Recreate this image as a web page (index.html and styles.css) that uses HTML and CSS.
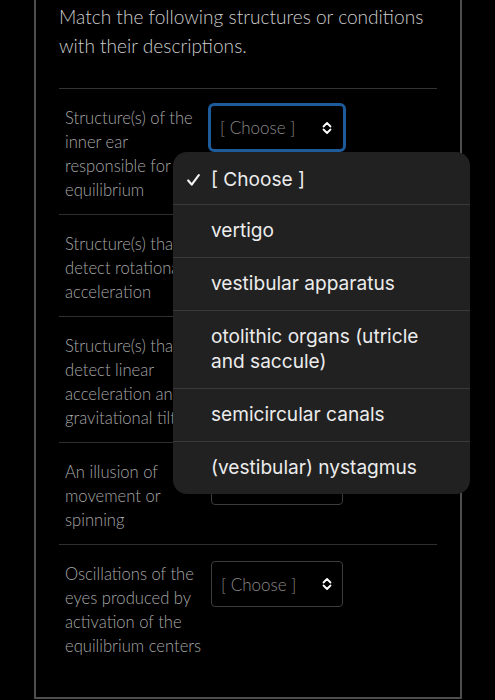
FILE: index.html
```html
<!DOCTYPE html>
<html>
<head>
<meta charset="utf-8">
<link rel="stylesheet" href="styles.css">
</head>
<body>
<div class="quiz">
  <p class="question">Match the following structures or conditions with their descriptions.</p>
  <div class="rows">
    <div class="row">
      <div class="label">Structure(s) of the inner ear responsible for equilibrium</div>
      <div class="select focused"><span class="sel-text">[ Choose ]</span><svg class="chev" viewBox="0 0 10 14" width="10" height="14"><path d="M1.5 5.5 L5 2 L8.5 5.5 M1.5 8.5 L5 12 L8.5 8.5" fill="none" stroke="#fff" stroke-width="1.8" stroke-linecap="round" stroke-linejoin="round"/></svg></div>
    </div>
    <div class="row">
      <div class="label">Structure(s) that detect rotational acceleration</div>
      <div class="select"><span class="sel-text">[ Choose ]</span><svg class="chev" viewBox="0 0 10 14" width="10" height="14"><path d="M1.5 5.5 L5 2 L8.5 5.5 M1.5 8.5 L5 12 L8.5 8.5" fill="none" stroke="#fff" stroke-width="1.8" stroke-linecap="round" stroke-linejoin="round"/></svg></div>
    </div>
    <div class="row">
      <div class="label">Structure(s) that detect linear acceleration and gravitational tilt</div>
      <div class="select"><span class="sel-text">[ Choose ]</span><svg class="chev" viewBox="0 0 10 14" width="10" height="14"><path d="M1.5 5.5 L5 2 L8.5 5.5 M1.5 8.5 L5 12 L8.5 8.5" fill="none" stroke="#fff" stroke-width="1.8" stroke-linecap="round" stroke-linejoin="round"/></svg></div>
    </div>
    <div class="row">
      <div class="label">An illusion of movement or spinning</div>
      <div class="select"><span class="sel-text">[ Choose ]</span><svg class="chev" viewBox="0 0 10 14" width="10" height="14"><path d="M1.5 5.5 L5 2 L8.5 5.5 M1.5 8.5 L5 12 L8.5 8.5" fill="none" stroke="#fff" stroke-width="1.8" stroke-linecap="round" stroke-linejoin="round"/></svg></div>
    </div>
    <div class="row">
      <div class="label">Oscillations of the eyes produced by activation of the equilibrium centers</div>
      <div class="select"><span class="sel-text">[ Choose ]</span><svg class="chev" viewBox="0 0 10 14" width="10" height="14"><path d="M1.5 5.5 L5 2 L8.5 5.5 M1.5 8.5 L5 12 L8.5 8.5" fill="none" stroke="#fff" stroke-width="1.8" stroke-linecap="round" stroke-linejoin="round"/></svg></div>
    </div>
  </div>
</div>
<ul class="menu">
  <li class="item"><svg class="check" viewBox="0 0 13 12" width="13" height="12"><path d="M1.2 6.5 L4.7 10.6 L11.8 1.2" fill="none" stroke="#f2f2f2" stroke-width="2.2" stroke-linecap="round" stroke-linejoin="round"/></svg><span>[ Choose ]</span></li>
  <li class="item"><span class="nocheck"></span><span>vertigo</span></li>
  <li class="item"><span class="nocheck"></span><span>vestibular apparatus</span></li>
  <li class="item"><span class="nocheck"></span><span>otolithic organs (utricle and saccule)</span></li>
  <li class="item"><span class="nocheck"></span><span>semicircular canals</span></li>
  <li class="item"><span class="nocheck"></span><span>(vestibular) nystagmus</span></li>
</ul>
</body>
</html>
```

FILE: styles.css
```css
html, body {
  margin: 0;
  padding: 0;
  background: #000;
}
body {
  font-family: Lato, "Liberation Sans", sans-serif;
  font-weight: 300;
  height: 700px;
  overflow: hidden;
  position: relative;
}
.quiz {
  box-sizing: border-box;
  margin-left: 34px;
  width: 428px;
  height: 699px;
  border: 2px solid #4e4e4e;
  border-top: none;
  padding: 0 23px;
}
.question {
  margin: 0;
  padding-top: 2px;
  padding-bottom: 28px;
  font-size: 19.1px;
  line-height: 29px;
  color: #cdcdcd;
}
.row {
  display: flex;
  align-items: flex-start;
  border-top: 1px solid #2e2e2e;
  padding: 17px 0 12px 6px;
}
.row:first-child {
  border-top-color: #333;
}
.label {
  width: 142px;
  flex: none;
  font-size: 16.6px;
  line-height: 24px;
  color: #a6a6a6;
  overflow: hidden;
}
.select {
  box-sizing: border-box;
  margin-left: 4px;
  margin-top: -1px;
  width: 132px;
  height: 46px;
  border: 1px solid #3c3c3c;
  border-radius: 4px;
  display: flex;
  align-items: center;
  justify-content: space-between;
  padding: 0 10px 0 9px;
}
.select.focused {
  margin-left: 1px;
  margin-top: -3px;
  width: 138px;
  height: 49px;
  border: 3px solid #1d5b9b;
  border-radius: 6px;
  padding-left: 9px;
  padding-right: 11px;
}
.sel-text {
  font-size: 17px;
  color: #8a8a8a;
}
.chev {
  display: block;
}
.menu {
  position: absolute;
  left: 173px;
  top: 152px;
  width: 297px;
  margin: 0;
  padding: 0;
  list-style: none;
  background: #212122;
  border-radius: 14px;
  overflow: hidden;
  font-family: Inter, "Noto Sans", sans-serif;
  font-weight: 400;
  font-size: 19.1px;
  line-height: 25px;
  color: #ececec;
}
.item {
  display: flex;
  align-items: flex-start;
  gap: 11px;
  padding: 13px 20px 14px 14px;
  border-top: 1px solid #3a3a3c;
}
.item:first-child {
  border-top: none;
  padding-top: 15px;
  padding-bottom: 12px;
}
.check {
  flex: none;
  margin-top: 7px;
}
.nocheck {
  flex: none;
  width: 13px;
}
```
